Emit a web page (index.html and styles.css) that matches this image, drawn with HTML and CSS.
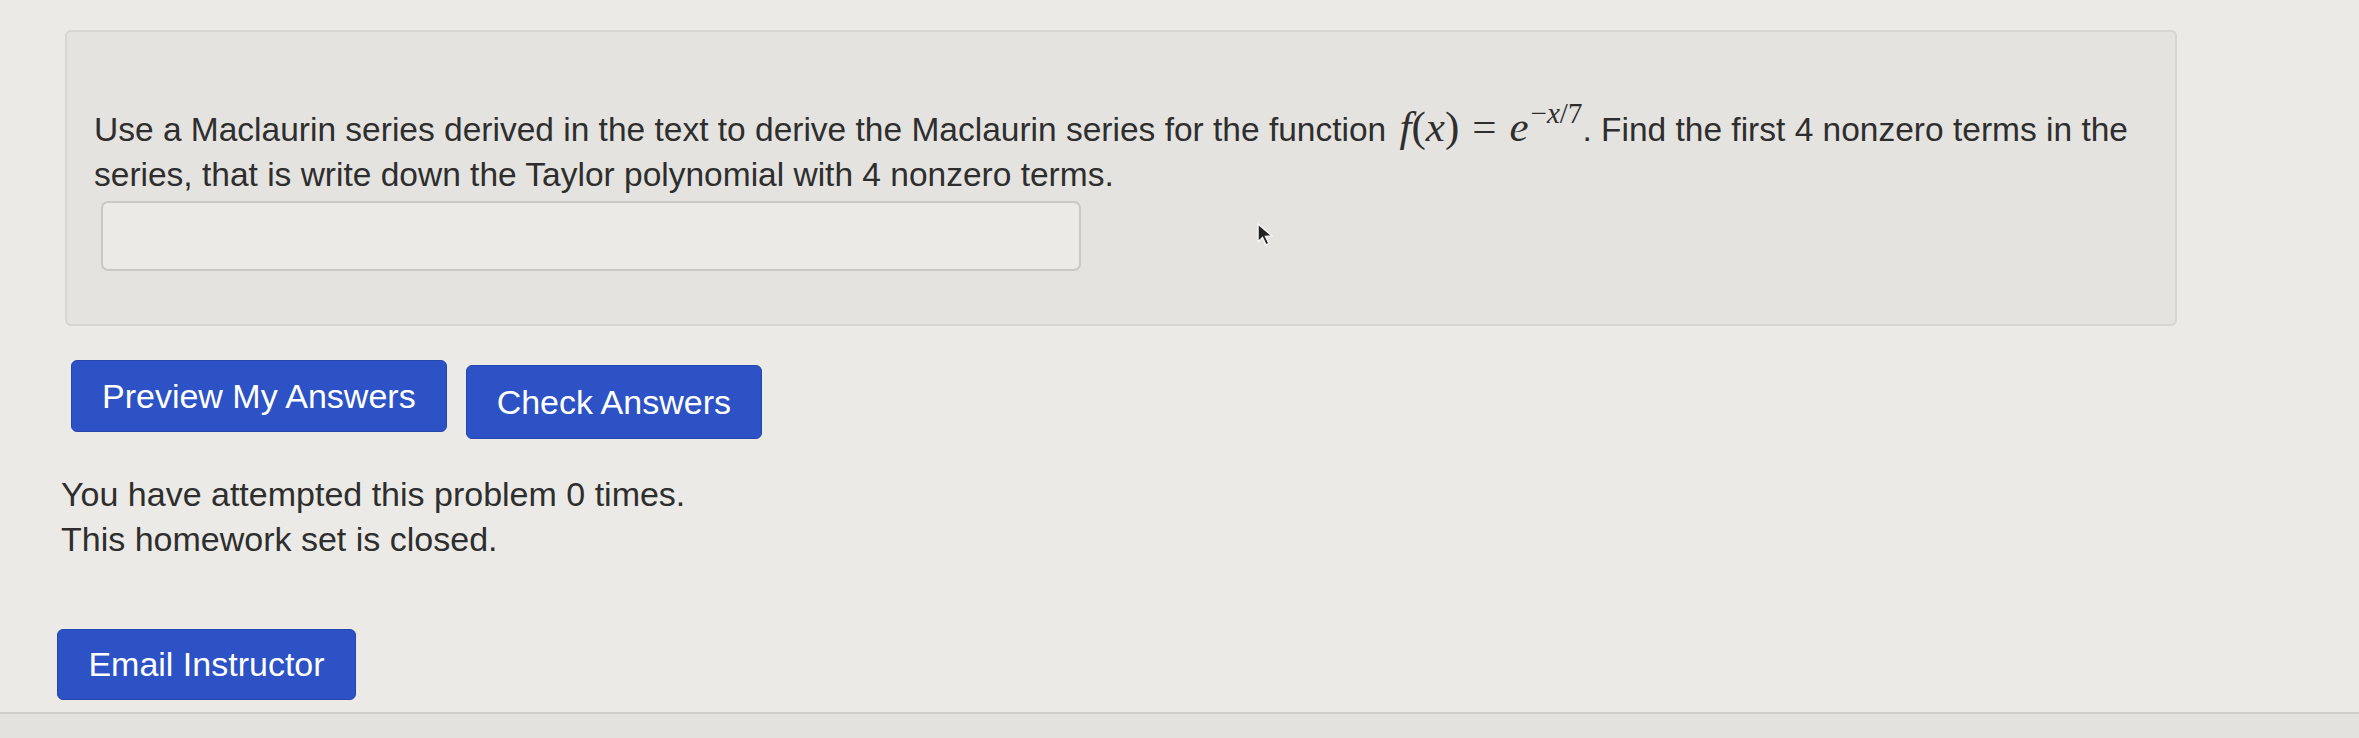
FILE: index.html
```html
<!DOCTYPE html>
<html lang="en">
    <head>
        <meta charset="UTF-8">
        <title>Problem</title>
        <link rel="stylesheet" href="styles.css">
    </head>
    <body>

    <div class="page">
        <div class="problem">
            <p class="problem-text">
                Use a Maclaurin series derived in the text to derive the Maclaurin series for the function
                <span class="math"><i>f</i>(<i>x</i>)<span class="eq">=</span><i>e</i><sup>&minus;<i>x</i>/7</sup></span>. Find the first 4 nonzero terms in the
                series, that is write down the Taylor polynomial with 4 nonzero terms.
            </p>
            <input class="answer" type="text">
            <svg class="cursor" width="20" height="26" viewBox="0 0 20 26">
                <path d="M3 2 L3 20 L7.5 15.5 L11 23 L14 21.5 L10.5 14.5 L17 14 Z" fill="#222" stroke="#f4f4f4" stroke-width="1.5"/>
            </svg>
        </div>

        <div class="actions">
            <button class="btn">Preview My Answers</button>
            <button class="btn btn-check">Check Answers</button>
        </div>

        <div class="status">
            <p>You have attempted this problem 0 times.</p>
            <p>This homework set is closed.</p>
        </div>

        <button class="btn btn-email">Email Instructor</button>
    </div>

    <div class="footer"></div>

    </body>
</html>
```

FILE: styles.css
```css
* {
    box-sizing: border-box;
    margin: 0;
    padding: 0;
}
body {
    background-color: #ebeae6;
    font-family: "Liberation Sans", Arial, sans-serif;
    color: #2e2e2e;
    height: 738px;
    overflow: hidden;
}
.page {
    padding-top: 30px;
    padding-left: 57px;
    padding-right: 180px;
    height: 712px;
}
.problem {
    position: relative;
    margin-left: 8px;
    width: 2112px;
    height: 296px;
    padding-top: 72px;
    padding-left: 27px;
    padding-right: 2px;
    background-color: #e4e3df;
    border: 2px solid #d6d5d1;
    border-radius: 6px;
}
.problem-text {
    font-size: 33.5px;
    line-height: 45px;
}
.math {
    font-family: "Liberation Serif", "Times New Roman", serif;
    font-size: 43px;
    margin-left: 4px;
}
.math .eq {
    padding-left: 13px;
    padding-right: 13px;
}
.math sup {
    font-size: 29px;
    line-height: 0;
    vertical-align: 18px;
    margin-left: 2px;
}
.answer {
    display: block;
    margin-top: 4px;
    margin-left: 7px;
    width: 980px;
    height: 70px;
    background-color: #ebeae7;
    border: 2px solid #c9c8c4;
    border-radius: 7px;
}
.cursor {
    position: absolute;
    left: 1188px;
    top: 190px;
}
.actions {
    display: flex;
    align-items: flex-start;
    gap: 19px;
    margin-top: 34px;
    margin-left: 14px;
}
.btn {
    font-family: "Liberation Sans", Arial, sans-serif;
    font-size: 34px;
    color: #ffffff;
    background-color: #2c52c6;
    border: 1px solid #2446ad;
    border-radius: 6px;
    height: 72px;
    padding-left: 30px;
    padding-right: 30px;
}
.btn-check {
    margin-top: 5px;
    height: 74px;
    padding-left: 30px;
    padding-right: 30px;
}
.status {
    margin-top: 33px;
    margin-left: 4px;
    font-size: 34px;
    line-height: 45px;
}
.btn-email {
    margin-top: 67px;
    height: 71px;
    width: 299px;
    padding-left: 0;
    padding-right: 0;
}
.footer {
    border-top: 2px solid #cfceca;
    background-color: #e3e2de;
    height: 26px;
}
```
